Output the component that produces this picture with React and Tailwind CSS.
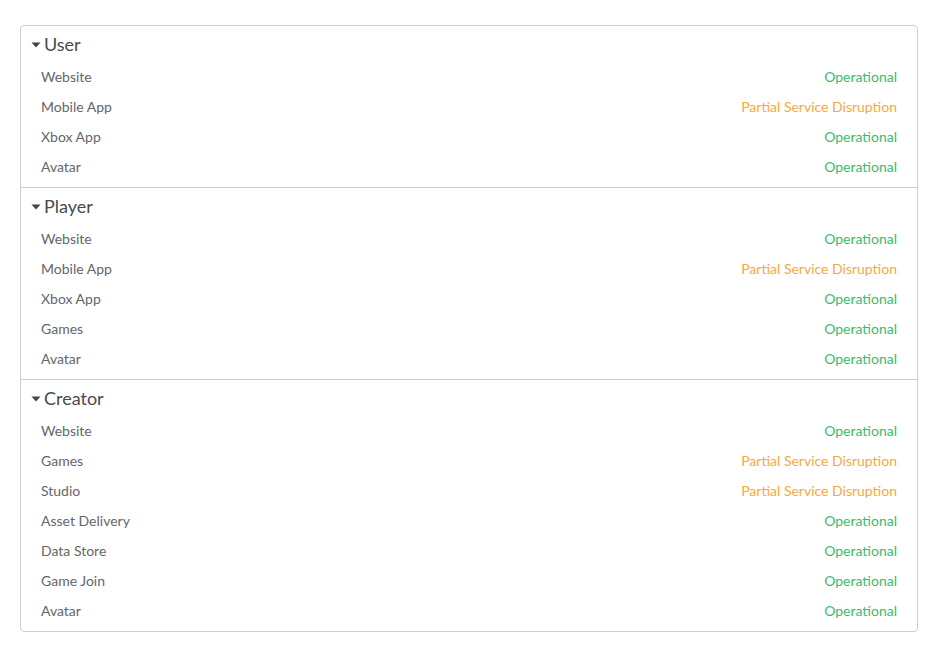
import React from 'react';

const OK = 'Operational';
const PSD = 'Partial Service Disruption';

const groups = [
  { name: 'User', items: [['Website', OK], ['Mobile App', PSD], ['Xbox App', OK], ['Avatar', OK]] },
  { name: 'Player', items: [['Website', OK], ['Mobile App', PSD], ['Xbox App', OK], ['Games', OK], ['Avatar', OK]] },
  {
    name: 'Creator',
    items: [['Website', OK], ['Games', PSD], ['Studio', PSD], ['Asset Delivery', OK], ['Data Store', OK], ['Game Join', OK], ['Avatar', OK]],
  },
];

function Caret() {
  return (
    <svg width="10" height="6" viewBox="0 0 10 6" className="mr-[3px] mt-[1px]">
      <path d="M0.5 0.5h9L5 5.5z" fill="#444" />
    </svg>
  );
}

export default function App() {
  return (
    <div className="min-h-screen bg-white pt-[25px] px-[20px] pr-[29px]" style={{ fontFamily: 'Lato, "Open Sans", sans-serif' }}>
      <div className="border border-[#cfcfcf] rounded-[4px] w-[898px]">
        {groups.map((g, gi) => (
          <div key={g.name} className={`pb-[6px] ${gi > 0 ? 'border-t border-[#cfcfcf]' : ''}`}>
            <div className="h-[35px] flex items-center pl-[10px] pt-[2px] text-[18px] text-[#4a4a4a]">
              <Caret />
              <span>{g.name}</span>
            </div>
            {g.items.map(([label, status], i) => (
              <div key={i} className="h-[30px] flex items-center justify-between pl-[20px] pr-[20px] text-[14px]">
                <span className="text-[#666]">{label}</span>
                <span className={status === OK ? 'text-[#3dbb6c]' : 'text-[#f7a93e]'}>{status}</span>
              </div>
            ))}
          </div>
        ))}
      </div>
    </div>
  );
}
